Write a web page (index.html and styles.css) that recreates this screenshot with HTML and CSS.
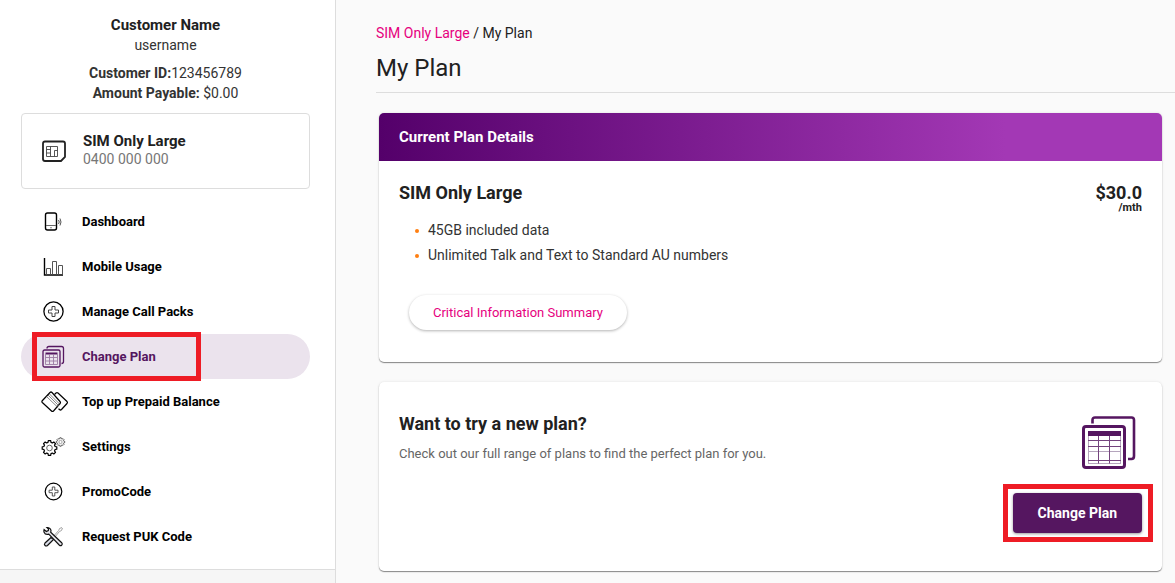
FILE: index.html
```
<!DOCTYPE html>
<html lang="en">
<head>
    <meta charset="UTF-8">
    <meta name="viewport" content="width=device-width, initial-scale=1.0">
    <title>My Plan</title>
    <link rel="stylesheet" href="styles.css">
</head>
<body>

    <!-- Sidebar -->
    <aside class="sidebar">
        <div class="sidebar-content">
            <div class="profile">
                <p class="profile-name">Customer Name</p>
                <p>username</p>
                <p class="profile-id"><strong>Customer ID:</strong>123456789</p>
                <p><strong>Amount Payable:</strong> $0.00</p>
            </div>

            <div class="service">
                <svg class="icon" viewBox="0 0 28 28">
                    <path d="M5 4.500h18q2 0 2 2v13.500l-4 4H5q-2 0-2-2v-15.500q0-2 2-2z" fill="none" stroke="#222" stroke-width="1.800"/>
                    <path d="M6.500 9.500h11v10h-11zM6.500 12.500h4M6.500 16h4M10.500 9.500v10M14.500 19.500v-6h3" fill="none" stroke="#444" stroke-width=".9"/>
                </svg>
                <div>
                    <p class="service-name">SIM Only Large</p>
                    <p class="service-number">0400 000 000</p>
                </div>
            </div>

            <nav class="menu">
                <a href="#">
                    <svg class="icon" viewBox="0 0 28 28">
                        <rect x="5.500" y="5" width="11" height="17" rx="2" fill="none" stroke="#000" stroke-width="1.400"/>
                        <path d="M6 17.500h10" stroke="#666"/>
                        <circle cx="11" cy="19.700" r=".8" fill="#777"/>
                        <path d="M18.500 12q1.500 2 0 4M20 10.500q2 3.500 0 7" fill="none" stroke="#555"/>
                    </svg>
                    Dashboard
                </a>
                <a href="#">
                    <svg class="icon" viewBox="0 0 28 28">
                        <path d="M4.500 5v17h18.500" fill="none" stroke="#000" stroke-width="1.400"/>
                        <path d="M6.500 21.500v-6h4v6M12.500 21.500v-13h4v13M18.500 21.500v-9h4v9" fill="none" stroke="#555"/>
                    </svg>
                    Mobile Usage
                </a>
                <a href="#">
                    <svg class="icon" viewBox="0 0 28 28">
                        <circle cx="13.500" cy="13.500" r="9.600" fill="none" stroke="#000" stroke-width="1.300"/>
                        <path d="M12 8.500h3v3.500h3.500v3h-3.500v3.500h-3v-3.500h-3.500v-3h3.500z" fill="none" stroke="#444"/>
                    </svg>
                    Manage Call Packs
                </a>
                <a href="#" class="active">
                    <svg class="icon" viewBox="0 0 28 28">
                        <path d="M7 5.500q0-2 2-2h12.500q2 0 2 2v13q0 2-2 2" fill="none" stroke="#551660" stroke-width="1.300"/>
                        <rect x="3" y="7" width="17" height="17" rx="1.500" fill="none" stroke="#551660" stroke-width="1.300"/>
                        <path d="M5.500 10.500h12" stroke="#551660" stroke-width="2"/>
                        <path d="M5.500 11v10.500h12V11M5.500 14.500h12M5.500 18h12M9.500 11v10.500M13.500 11v10.500" fill="none" stroke="#9b7ba3" stroke-width=".9"/>
                    </svg>
                    Change Plan
                    <span class="highlight"></span>
                </a>
                <a href="#">
                    <svg class="icon" viewBox="0 0 28 28">
                        <path d="M2 13l8-8.500q1-1 2 0l8 9q1 1 0 2l-6.500 7.500q-1 1-2 0l-9.200-8.500q-.8-.8-.3-1.500z" fill="none" stroke="#000" stroke-width="1.200"/>
                        <path d="M6.500 8.500l11.500 11M8 7l11 11M9.300 5.800l10.500 10.500" stroke="#555" stroke-width=".7"/>
                        <path d="M14.500 6.500l1.500-1.500q1-.8 2 0l9 8.500q.8 1 0 2l-5.500 6q-1 1-2 0l-1-.8" fill="none" stroke="#000" stroke-width="1.200"/>
                    </svg>
                    Top up Prepaid Balance
                </a>
                <a href="#">
                    <svg class="icon" viewBox="0 0 28 28">
                        <g id="gear" transform="translate(9.500 15)" fill="none" stroke="#000" stroke-width="1.200" stroke-linejoin="round">
                            <path d="M5.600-1.500L7.300-1.200 7.300 1.200 5.600 1.500 5 2.900 6 4.300 4.300 6 2.900 5 1.500 5.600 1.200 7.300-1.200 7.300-1.500 5.600-2.900 5-4.300 6-6 4.300-5 2.900-5.600 1.500-7.300 1.200-7.300-1.200-5.600-1.500-5-2.900-6-4.300-4.300-6-2.900-5-1.500-5.600-1.200-7.300 1.200-7.300 1.500-5.600 2.900-5 4.300-6 6-4.300 5-2.900z"/>
                            <circle r="2.800" stroke="#555" stroke-width=".9"/>
                        </g>
                        <g transform="translate(20.500 9) scale(.58)" fill="none" stroke="#333" stroke-width="1.300" stroke-linejoin="round">
                            <path d="M5.600-1.500L7.300-1.200 7.300 1.200 5.600 1.500 5 2.900 6 4.300 4.300 6 2.900 5 1.500 5.600 1.200 7.300-1.200 7.300-1.500 5.600-2.900 5-4.300 6-6 4.300-5 2.900-5.600 1.500-7.300 1.200-7.300-1.200-5.600-1.500-5-2.900-6-4.300-4.300-6-2.900-5-1.500-5.600-1.200-7.300 1.200-7.300 1.500-5.600 2.900-5 4.300-6 6-4.300 5-2.900z"/>
                            <circle r="2.800" stroke="#777" stroke-width="1.100"/>
                        </g>
                    </svg>
                    Settings
                </a>
                <a href="#">
                    <svg class="icon" viewBox="0 0 28 28">
                        <circle cx="13.500" cy="13.500" r="8.300" fill="none" stroke="#000" stroke-width="1.200"/>
                        <path d="M12.300 9h2.500v3.200h3.200v2.500h-3.200v3.300h-2.500v-3.300h-3.200v-2.500h3.200z" fill="none" stroke="#444" stroke-width=".9"/>
                    </svg>
                    PromoCode
                </a>
                <a href="#">
                    <svg class="icon" viewBox="0 0 28 28">
                        <path d="M22 4.500l-2.500 1-.8 2-5.500 6M22.500 5l-1 2.500-2 1-5 6" fill="none" stroke="#999" stroke-width=".9"/>
                        <path d="M11 14.500l-6 5.500q-1.200 1.500 0 2.500t2.500 0l6-6z" fill="#d8dbe6" stroke="#111" stroke-width="1.200"/>
                        <path d="M7 4.500q3.500 0 4 3l-.3 1.700 11 10.500q1.200 1.200 0 2.500-1.200 1-2.500-.2L8.800 11.200q-3.500 1-4.700-2-.5-1.200 0-2.700l2.200 2 2-1 .2-1.500z" fill="#e4e4ea" stroke="#111" stroke-width="1.200"/>
                    </svg>
                    Request PUK Code
                </a>
            </nav>
        </div>
        <div class="sidebar-footer"></div>
    </aside>

    <!-- Page content -->
    <main class="main">
        <div class="page-header">
            <p class="breadcrumb"><a href="#">SIM Only Large</a> / My Plan</p>
            <h1>My Plan</h1>
        </div>

        <section class="card">
            <h2 class="card-header">Current Plan Details</h2>
            <div class="card-body">
                <div>
                    <h3>SIM Only Large</h3>
                    <ul class="features">
                        <li>45GB included data</li>
                        <li>Unlimited Talk and Text to Standard AU numbers</li>
                    </ul>
                    <button type="button" class="btn-summary">Critical Information Summary</button>
                </div>
                <p class="price">$30.0<span>/mth</span></p>
            </div>
        </section>

        <section class="card new-plan">
            <div>
                <h3>Want to try a new plan?</h3>
                <p class="new-plan-text">Check out our full range of plans to find the perfect plan for you.</p>
            </div>
            <div class="new-plan-action">
                <svg class="plan-icon" viewBox="0 0 54 54">
                    <path d="M10.500 7.500V4q0-2.500 2.500-2.500h36.500q2.500 0 2.500 2.500v36q0 3-2.500 3H46" fill="none" stroke="#551660" stroke-width="2.600"/>
                    <rect x="1.500" y="10.500" width="41" height="41" rx="2.500" fill="none" stroke="#551660" stroke-width="3"/>
                    <path d="M6 15h33v5H6z" fill="#551660"/>
                    <path d="M6.500 20v27.500M38.500 20v27.500M6 47.500h33M6 35.500h33" fill="none" stroke="#b5a5bd"/>
                    <path d="M6 24.500h33M6 30.500h33M6 44.500h33M16.500 20v27.500M27.500 20v27.500" fill="none" stroke="#74447e"/>
                </svg>
                <div class="btn-wrap">
                    <button type="button" class="btn-change">Change Plan</button>
                    <span class="highlight"></span>
                </div>
            </div>
        </section>
    </main>

</body>
</html>
```
FILE: styles.css
```
/* General */
* {
    box-sizing: border-box;
}

body {
    font-family: Roboto, Arial, sans-serif;
    font-size: 14px;
    line-height: 20px;
    color: #333;
    background-color: #fafafa;
    margin: 0;
    display: flex;
    min-height: 100vh;
}

h1, h2, h3, p, ul {
    margin: 0;
    padding: 0;
}

button {
    font-family: inherit;
    border: none;
    cursor: pointer;
}

a {
    text-decoration: none;
}

strong {
    font-weight: 700;
}

/* Sidebar */
.sidebar {
    flex: 0 0 336px;
    display: flex;
    flex-direction: column;
    background-color: #fff;
    border-right: 1px solid #ddd;
}

.sidebar-content {
    padding: 15px 25px 10px 21px;
}

.profile {
    text-align: center;
}

.profile-name {
    font-size: 15px;
    font-weight: 700;
    color: #212121;
}

.profile-id {
    margin-top: 8px;
}

.service {
    display: flex;
    gap: 15px;
    margin: 10px 0;
    padding: 18px 18px 20px;
    border: 1px solid #ddd;
    border-radius: 4px;
}

.service .icon {
    margin-top: 5px;
}

.service-name {
    font-size: 15px;
    line-height: 18px;
    font-weight: 700;
    color: #212121;
}

.service-number {
    line-height: 18px;
    color: #777;
}

.icon {
    width: 28px;
    height: 28px;
    flex: none;
}

.menu a {
    position: relative;
    display: flex;
    align-items: center;
    gap: 14px;
    height: 45px;
    padding: 0 19px;
    border-radius: 23px;
    font-size: 13px;
    font-weight: 700;
    color: #000;
}

.menu .active {
    color: #551660;
    background-color: #ebe3ed;
}

.sidebar-footer {
    flex: 1;
    background-color: #f6f6f6;
    border-top: 1px solid #ddd;
}

/* Red frame drawn over an element */
.highlight {
    position: absolute;
    border: 5px solid #ee1c25;
    pointer-events: none;
}

.menu .highlight {
    top: -2px;
    bottom: -2px;
    left: 11px;
    width: 169px;
}

/* Content */
.main {
    flex: 1;
    padding: 23px 0 11px 40px;
}

.page-header {
    border-bottom: 1px solid #ddd;
    margin-bottom: 20px;
    color: #212121;
}

.breadcrumb a {
    color: #e6007e;
}

h1 {
    font-size: 24px;
    line-height: 30px;
    font-weight: 400;
    padding: 10px 0 9px;
}

h3 {
    font-size: 18px;
    line-height: 24px;
    font-weight: 700;
    color: #212121;
}

.card {
    margin: 0 13px 20px 3px;
    background-color: #fff;
    border-radius: 5px;
    box-shadow: 0 1px 1px #888, 0 0 3px rgba(0, 0, 0, 0.1);
}

.card-header {
    padding: 14px 20px;
    border-radius: 5px 5px 0 0;
    background: linear-gradient(90deg, #54006a, #a338b5 80%);
    font-size: 15px;
    line-height: 20px;
    font-weight: 700;
    color: #fff;
}

.card-body {
    display: flex;
    justify-content: space-between;
    padding: 20px 20px 32px;
}

.features {
    list-style: none;
    margin: 13px 0 27px 16px;
}

.features li {
    display: flex;
    align-items: center;
    gap: 9px;
    line-height: 25px;
}

.features li::before {
    content: "";
    width: 4px;
    height: 4px;
    border-radius: 50%;
    background-color: #ff7f11;
}

.btn-summary {
    margin-left: 10px;
    padding: 0 24px;
    height: 35px;
    border-radius: 18px;
    background-color: #fff;
    box-shadow: 0 1px 3px rgba(0, 0, 0, 0.3);
    font-size: 13px;
    color: #e6007e;
}

.price {
    font-size: 18px;
    line-height: 24px;
    font-weight: 700;
    color: #212121;
    text-align: right;
}

.price span {
    display: block;
    font-size: 11px;
    line-height: 6px;
}

/* New plan card */
.new-plan {
    display: flex;
    justify-content: space-between;
    padding: 30px 20px 38px;
    margin-bottom: 0;
}

.new-plan-text {
    margin-top: 8px;
    font-size: 13px;
    color: #666;
}

.new-plan-action {
    display: flex;
    flex-direction: column;
    align-items: flex-end;
    gap: 23px;
    padding-top: 4px;
}

.plan-icon {
    width: 54px;
    height: 54px;
    margin-right: 6px;
}

.btn-wrap {
    position: relative;
}

.btn-wrap .highlight {
    inset: -9px -11px -9px -10px;
}

.btn-change {
    display: block;
    height: 40px;
    padding: 0 25px;
    border-radius: 4px;
    background-color: #551660;
    box-shadow: 0 1px 3px rgba(0, 0, 0, 0.4);
    font-size: 14px;
    font-weight: 700;
    color: #fff;
}
```
